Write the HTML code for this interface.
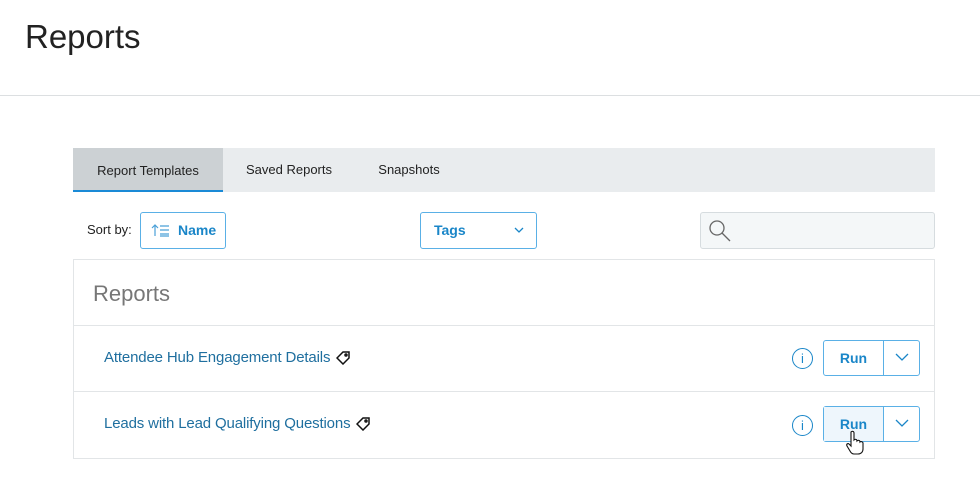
<!DOCTYPE html>
<html><head><style>
*{box-sizing:border-box;margin:0;padding:0}
body{width:980px;height:492px;background:#fff;font-family:"Liberation Sans",sans-serif;position:relative;overflow:hidden;color:#222}
.a{position:absolute}
.btn{position:absolute;border:1px solid #5ab0e6;border-radius:3px;background:#fff;color:#1a86c8;font-weight:bold;font-size:14px}
.tab{position:absolute;top:148px;height:44px;font-size:13px;line-height:44px;text-align:center;color:#222}
.link{position:absolute;left:104px;color:#1f6f9f;font-size:15px;letter-spacing:-0.15px}
.tag{display:inline-block;vertical-align:middle;margin-left:6px}
.info{position:absolute;left:792px;width:21px;height:21px;border:1.3px solid #1a86c8;border-radius:50%;color:#1a86c8;font-size:13px;text-align:center;line-height:19px}
.run{position:absolute;left:823px;width:97px;height:36px;border:1px solid #5ab0e6;border-radius:3px;background:#fff}
.run .r{position:absolute;left:0;top:0;width:60px;height:34px;border-right:1px solid #5ab0e6;color:#1a86c8;font-weight:bold;font-size:14px;text-align:center;line-height:34px}
.run svg{position:absolute;left:71px;top:12px}
</style></head><body>
<div class="a" style="left:25px;top:18px;font-size:33px;color:#222">Reports</div>
<div class="a" style="left:0;top:95px;width:980px;height:1px;background:#dcdfe1"></div>
<div class="a" style="left:73px;top:148px;width:862px;height:44px;background:#e9ecee"></div>
<div class="a" style="left:73px;top:148px;width:150px;height:44px;background:#ccd1d4;border-bottom:2px solid #1a8ad6"></div>
<div class="tab" style="left:73px;width:150px;line-height:46px">Report Templates</div>
<div class="tab" style="left:233px;width:112px">Saved Reports</div>
<div class="tab" style="left:366px;width:86px">Snapshots</div>
<div class="a" style="left:87px;top:222px;font-size:13px">Sort by:</div>
<div class="btn" style="left:140px;top:212px;width:86px;height:37px;line-height:35px;padding-left:37px">Name</div>
<svg class="a" style="left:151px;top:223px" width="20" height="14" viewBox="0 0 20 14" fill="none" stroke="#4aa0d8" stroke-width="1.2"><path d="M4 13V2M1 5l3-3 3 3M9 3h9M9 7h9M9 11h9M9 13h9"/></svg>
<div class="btn" style="left:420px;top:212px;width:117px;height:37px;line-height:35px;padding-left:13px">Tags</div>
<svg class="a" style="left:514px;top:227px" width="10" height="6"><path d="M1 1l4 4 4-4" stroke="#1a86c8" fill="none" stroke-width="1.3"/></svg>
<div class="a" style="left:700px;top:212px;width:235px;height:37px;background:#f4f7f8;border:1px solid #d6dcdf;border-radius:3px"></div>
<svg class="a" style="left:708px;top:219px" width="24" height="24" fill="none" stroke="#666" stroke-width="1.3"><circle cx="9" cy="9" r="7"/><path d="M14 14l8 8"/></svg>
<div class="a" style="left:73px;top:259px;width:862px;height:200px;border:1px solid #e2e5e7"></div>
<div class="a" style="left:93px;top:281px;font-size:22px;color:#777">Reports</div>
<div class="a" style="left:73px;top:325px;width:862px;height:1px;background:#e2e5e7"></div>
<div class="a" style="left:73px;top:391px;width:862px;height:1px;background:#e2e5e7"></div>
<div class="link" style="top:349px">Attendee Hub Engagement Details<svg class="tag" width="14" height="14" viewBox="0 0 14 14" fill="none" stroke="#111" stroke-width="1.5"><path d="M7 1h6v6l-6 6-6-6z"/><circle cx="10" cy="4" r="1"/></svg></div>
<div class="link" style="top:415px">Leads with Lead Qualifying Questions<svg class="tag" width="14" height="14" viewBox="0 0 14 14" fill="none" stroke="#111" stroke-width="1.5"><path d="M7 1h6v6l-6 6-6-6z"/><circle cx="10" cy="4" r="1"/></svg></div>
<div class="info" style="top:348px">i</div>
<div class="info" style="top:415px">i</div>
<div class="run" style="top:340px"><div class="r">Run</div><svg width="14" height="8"><path d="M1 1l6 6 6-6" stroke="#1a86c8" fill="none" stroke-width="1.3"/></svg></div>
<div class="run" style="top:406px"><div class="r" style="background:#eef6fc">Run</div><svg width="14" height="8"><path d="M1 1l6 6 6-6" stroke="#1a86c8" fill="none" stroke-width="1.3"/></svg></div>
<svg class="a" style="left:845px;top:430px" width="22" height="26" viewBox="0 0 22 26"><path d="M6 2c1-1 3-1 3 1v7c1-1 3-1 3 1 1-1 3-1 3 1 1-1 3 0 3 1v6c0 3-2 5-5 5H9c-2 0-3-1-4-3l-3-5c-1-2 1-3 2-2l2 2z" fill="#fff" stroke="#111" stroke-width="1.1"/></svg>
</body></html>
